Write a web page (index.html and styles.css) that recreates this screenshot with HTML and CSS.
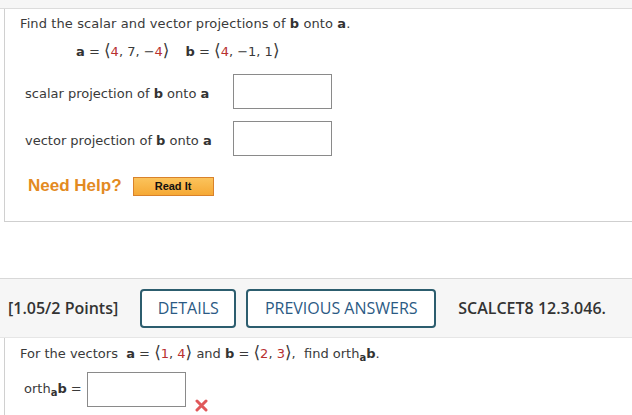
FILE: index.html
```html
<!DOCTYPE html>
<html>
<head>
<meta charset="utf-8">
<link rel="stylesheet" href="styles.css">
</head>
<body>
<div class="topband"></div>
<div class="card">
  <p class="prompt">Find the scalar and vector projections of <b>b</b> onto <b>a</b>.</p>
  <p class="eq"><b>a</b> = <span class="br">⟨</span><span class="n">4</span>, 7, −<span class="n">4</span><span class="br">⟩</span><span class="gap"></span><b>b</b> = <span class="br">⟨</span><span class="n">4</span>, −1, 1<span class="br">⟩</span></p>
  <div class="row"><span class="lbl">scalar projection of <b>b</b> onto <b>a</b></span><span class="box"></span></div>
  <div class="row"><span class="lbl">vector projection of <b>b</b> onto <b>a</b></span><span class="box"></span></div>
  <div class="help"><span class="need">Need Help?</span><span class="readit">Read It</span></div>
</div>
<div class="spacer"></div>
<div class="header">
  <span class="pts">[1.05/2 Points]</span>
  <span class="btn details">DETAILS</span>
  <span class="btn prev">PREVIOUS ANSWERS</span>
  <span class="code">SCALCET8 12.3.046.</span>
</div>
<div class="card2">
  <p class="prompt2">For the vectors&nbsp; <b>a</b> = <span class="br">⟨</span><span class="n">1</span>, <span class="n">4</span><span class="br">⟩</span> and <b>b</b> = <span class="br">⟨</span><span class="n">2</span>, <span class="n">3</span><span class="br">⟩</span>, &nbsp;find orth<sub>a</sub><b>b</b>.</p>
  <div class="row2"><span class="lbl2">orth<sub>a</sub><b>b</b> =</span><span class="box"></span><svg class="x" width="13" height="13" viewBox="0 0 13 13"><path d="M2 2 L11 11 M11 2 L2 11" stroke="#e0585a" stroke-width="3" stroke-linecap="round"/></svg></div>
</div>
</body>
</html>
```

FILE: styles.css
```css
body {
  margin: 0;
  font-family: "DejaVu Sans", Verdana, sans-serif;
  font-size: 13px;
  color: #3a3a3a;
  background: #fff;
  overflow: hidden;
}
b { color: #333; }
.topband {
  height: 8px;
  background: #f6f6f6;
  border-bottom: 1px solid #dcdcdc;
}
.card {
  margin-left: 4px;
  height: 212px;
  border-left: 1px solid #d0d0d0;
  border-bottom: 1px solid #cfcfcf;
  padding-left: 15px;
  box-sizing: content-box;
}
.prompt {
  margin: 0;
  padding-top: 7px;
  line-height: 16px;
  letter-spacing: 0.1px;
}
.eq {
  margin: 0;
  padding-top: 10px;
  padding-left: 56px;
  line-height: 18px;
}
.br { font-size: 17px; line-height: 16px; }
.n { color: #b83030; }
.gap { display: inline-block; width: 16px; }
.row {
  display: flex;
  align-items: center;
  margin-top: 13px;
  padding-left: 5px;
}
.row + .row { margin-top: 12px; }
.lbl { width: 208px; padding-top: 4px; }
.box {
  display: inline-block;
  width: 97px;
  height: 33px;
  border: 1px solid #8a8a8a;
  background: #fff;
}
.help {
  display: flex;
  align-items: center;
  margin-top: 20px;
  padding-left: 8px;
}
.need {
  font-family: "Liberation Sans", Arial, sans-serif;
  font-weight: bold;
  font-size: 17px;
  color: #e38a22;
  margin-right: 11px;
}
.readit {
  display: inline-block;
  width: 79px;
  height: 17px;
  line-height: 17px;
  text-align: center;
  background: linear-gradient(#fbc35c, #f6a935);
  border: 1px solid #d9822b;
  font-family: "Liberation Sans", Arial, sans-serif;
  font-weight: bold;
  font-size: 11px;
  color: #111;
}
.spacer { height: 56px; }
.header {
  display: flex;
  align-items: center;
  height: 58px;
  background: #f6f6f6;
  border-top: 1px solid #d8d8d8;
  border-bottom: 1px solid #e6e6e6;
  font-family: "Open Sans", sans-serif;
  font-size: 16px;
}
.pts {
  font-weight: 600;
  color: #333;
  margin-left: 8px;
  margin-right: 22px;
}
.btn {
  display: inline-block;
  height: 35px;
  line-height: 35px;
  border: 2px solid #2c5d6e;
  border-radius: 4px;
  color: #2b5a84;
  text-align: center;
  background: #fff;
}
.details { width: 92px; margin-right: 10px; }
.prev { width: 186px; margin-right: 22px; }
.code { font-weight: 600; color: #333; }
.card2 {
  margin-left: 4px;
  border-left: 1px solid #d0d0d0;
  padding-left: 15px;
  height: 100px;
}
.prompt2 {
  margin: 0;
  padding-top: 6px;
  line-height: 18px;
}
sub { font-size: 10px; font-weight: bold; vertical-align: -3px; color: #333; line-height: 0; }
.row2 {
  display: flex;
  align-items: flex-start;
  margin-top: 9px;
  padding-left: 4px;
}
.lbl2 { margin-top: 9px; margin-right: 5px; line-height: 16px; }
.x {
  display: block;
  margin-left: 9px;
  margin-top: 27px;
}
```
